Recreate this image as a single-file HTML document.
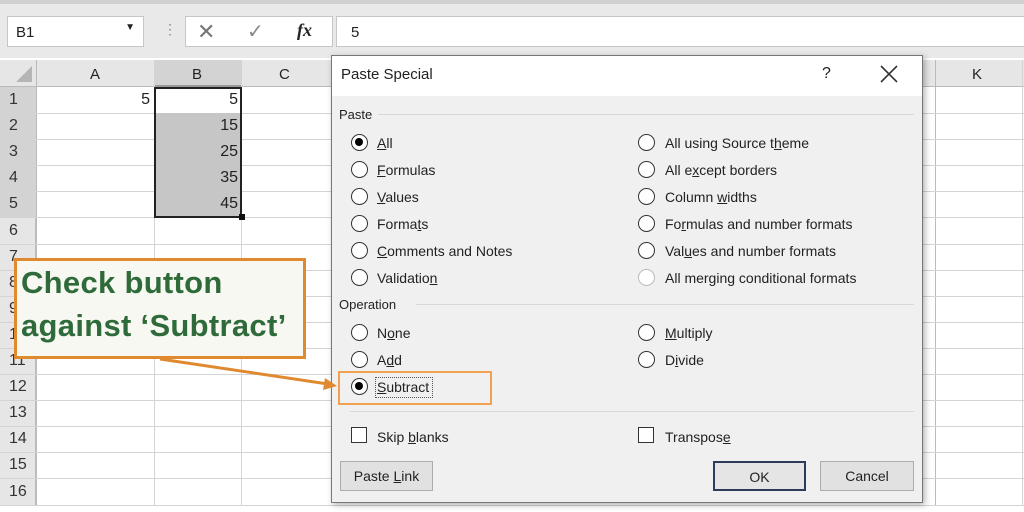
<!DOCTYPE html>
<html><head><style>
*{margin:0;padding:0;box-sizing:border-box}
body{width:1024px;height:512px;overflow:hidden;background:#fff;font-family:"Liberation Sans",sans-serif;position:relative;font-size:14px;color:#222}
.a{position:absolute}
.hl{position:absolute;height:1px;background:#d4d4d4}
.vl{position:absolute;width:1px;background:#d4d4d4}
.rad{position:absolute;width:17px;height:17px;border:1.5px solid #333;border-radius:50%;background:#fff}
.lbl{position:absolute;font-size:14px;color:#222}
.btn{position:absolute;height:30px;background:#e1e1e1;border:1px solid #adadad;text-align:center;line-height:28px;font-size:14px}
.cb{position:absolute;width:16px;height:16px;border:1.5px solid #333;background:#fff}
</style></head><body>
<div class="a" style="left:0;top:0;width:1024px;height:58px;background:#e9e9e9;border-top:4px solid #d0d0d0"></div>
<div class="a" style="left:7px;top:16px;width:137px;height:31px;background:#fff;border:1px solid #c6c6c6;font-size:15px;padding:7px 8px">B1<span style="position:absolute;right:8px;top:5px;font-size:10px">▼</span></div>
<div class="a" style="left:163px;top:21px;color:#888;font-size:14px">⋮</div>
<div class="a" style="left:185px;top:16px;width:148px;height:31px;background:#fff;border:1px solid #c6c6c6"></div>
<div class="a" style="left:197px;top:19px;font-size:22px;color:#777">✕</div>
<div class="a" style="left:247px;top:19px;font-size:20px;color:#888">✓</div>
<div class="a" style="left:297px;top:20px;font-size:18px;font-style:italic;font-weight:bold;font-family:'Liberation Serif',serif">fx</div>
<div class="a" style="left:336px;top:16px;width:690px;height:31px;background:#fff;border:1px solid #c6c6c6;font-size:15px;padding:7px 14px">5</div>
<div class="a" style="left:0;top:60px;width:1024px;height:27px;background:#e6e6e6;border-bottom:1px solid #bbb"></div>
<div class="a" style="left:16px;top:66px;width:0;height:0;border-left:16px solid transparent;border-bottom:16px solid #b5b5b5"></div>
<div class="a" style="left:90px;top:66px;font-size:15px">A</div>
<div class="a" style="left:155px;top:60px;width:86px;height:27px;background:#d3d3d3;border-bottom:2px solid #999"></div>
<div class="a" style="left:192px;top:66px;font-size:15px">B</div>
<div class="a" style="left:279px;top:66px;font-size:15px">C</div>
<div class="a" style="left:972px;top:66px;font-size:15px">K</div>
<div class="a" style="left:0;top:87px;width:36px;height:418px;background:#e6e6e6;border-right:1px solid #bbb"></div>
<div class="a" style="left:0;top:87px;width:36px;height:130px;background:#d3d3d3"></div>
<div class="vl" style="left:36px;top:60px;height:445px;background:#bbb"></div>
<div class="vl" style="left:154px;top:60px;height:445px"></div>
<div class="vl" style="left:241px;top:60px;height:445px"></div>
<div class="vl" style="left:935px;top:60px;height:445px;background:#bbb"></div>
<div class="vl" style="left:1022px;top:60px;height:445px"></div>
<div id="rows"></div>
<div class="a" style="left:155px;top:113px;width:86px;height:104px;background:#c6c6c6"></div>
<div class="a" style="left:154px;top:87px;width:88px;height:131px;border:2px solid #222"></div>
<div class="a" style="left:239px;top:214px;width:6px;height:6px;background:#111"></div>
<div class="a" style="left:120px;top:91px;width:30px;text-align:right;font-size:16px">5</div>
<div class="a" style="left:200px;top:91px;width:38px;text-align:right;font-size:16px">5</div>
<div class="a" style="left:200px;top:117px;width:38px;text-align:right;font-size:16px">15</div>
<div class="a" style="left:200px;top:143px;width:38px;text-align:right;font-size:16px">25</div>
<div class="a" style="left:200px;top:169px;width:38px;text-align:right;font-size:16px">35</div>
<div class="a" style="left:200px;top:195px;width:38px;text-align:right;font-size:16px">45</div>
<script>
var r=document.getElementById('rows'),h='';
for(var i=1;i<=16;i++){var t=87+(i-1)*26.1;h+='<div class="hl" style="left:0;width:1024px;top:'+Math.round(t+26)+'px"></div><div class="a" style="left:9px;top:'+Math.round(t+4)+'px;font-size:16px;color:#333">'+i+'</div>';}
r.innerHTML=h;
</script>
<div class="a" style="left:331px;top:55px;width:592px;height:448px;background:#f0f0f0;border:1px solid #777;box-shadow:2px 2px 6px rgba(0,0,0,.3)"></div>
<div class="a" style="left:332px;top:56px;width:590px;height:40px;background:#fff"></div>
<div class="lbl" style="left:341px;top:66px;font-size:15px">Paste Special</div>
<div class="lbl" style="left:822px;top:65px;font-size:16px">?</div>
<svg class="a" style="left:880px;top:65px" width="18" height="18"><path d="M1 1L17 17M17 1L1 17" stroke="#333" stroke-width="1.6"/></svg>
<div class="lbl" style="left:339px;top:107px;font-size:13px">Paste</div>
<div class="hl" style="left:378px;top:114px;width:536px;background:#d8d8d8"></div>
<div class="lbl" style="left:339px;top:297px;font-size:13px">Operation</div>
<div class="hl" style="left:416px;top:304px;width:498px;background:#d8d8d8"></div>
<div class="hl" style="left:350px;top:411px;width:564px;background:#d8d8d8"></div>
<div id="opts"></div>
<script>
var L=[["<u>A</u>ll",143,1],["<u>F</u>ormulas",170],["<u>V</u>alues",197],["Forma<u>t</u>s",224],["<u>C</u>omments and Notes",251],["Validatio<u>n</u>",278],["N<u>o</u>ne",333],["A<u>d</u>d",360],["<u>S</u>ubtract",387,1]];
var R=[["All using Source t<u>h</u>eme",143],["All e<u>x</u>cept borders",170],["Column <u>w</u>idths",197],["Fo<u>r</u>mulas and number formats",224],["Val<u>u</u>es and number formats",251],["All mergin<u>g</u> conditional formats",278,0,1],["<u>M</u>ultiply",333],["D<u>i</u>vide",360]];
var s='';
L.forEach(function(o){s+='<div class="rad" style="left:351px;top:'+(o[1]-9)+'px">'+(o[2]?'<div style="position:absolute;left:3px;top:3px;width:8px;height:8px;border-radius:50%;background:#000"></div>':'')+'</div><div class="lbl" style="left:377px;top:'+(o[1]-8)+'px">'+o[0]+'</div>';});
R.forEach(function(o){s+='<div class="rad" style="left:638px;top:'+(o[1]-9)+'px;'+(o[3]?'border-color:#bbb':'')+'"></div><div class="lbl" style="left:665px;top:'+(o[1]-8)+'px">'+o[0]+'</div>';});
document.getElementById('opts').innerHTML=s;
</script>
<div class="a" style="left:375px;top:377px;width:58px;height:21px;border:1px dotted #555"></div>
<div class="a" style="left:338px;top:371px;width:154px;height:34px;border:2px solid #f0a050"></div>
<div class="cb" style="left:351px;top:427px"></div>
<div class="lbl" style="left:377px;top:429px">Skip <u>b</u>lanks</div>
<div class="cb" style="left:638px;top:427px"></div>
<div class="lbl" style="left:665px;top:429px">Transpos<u>e</u></div>
<div class="btn" style="left:340px;top:461px;width:93px">Paste <u>L</u>ink</div>
<div class="btn" style="left:713px;top:461px;width:93px;border:2px solid #2b3b5e;background:#e5e5e5">OK</div>
<div class="btn" style="left:820px;top:461px;width:94px">Cancel</div>
<div class="a" style="left:14px;top:258px;width:292px;height:101px;background:#f6f8f1;border:3px solid #e08a30"></div>
<div class="a" style="left:21px;top:261px;font-size:31px;font-weight:bold;color:#2f6b3a;line-height:43px;letter-spacing:0.3px">Check button<br>against ‘Subtract’</div>
<svg class="a" style="left:0;top:0" width="1024" height="512"><line x1="160" y1="359" x2="328" y2="384" stroke="#e08a30" stroke-width="3"/><polygon points="337,386 325,378 323,390" fill="#e08a30"/></svg>
</body></html>
